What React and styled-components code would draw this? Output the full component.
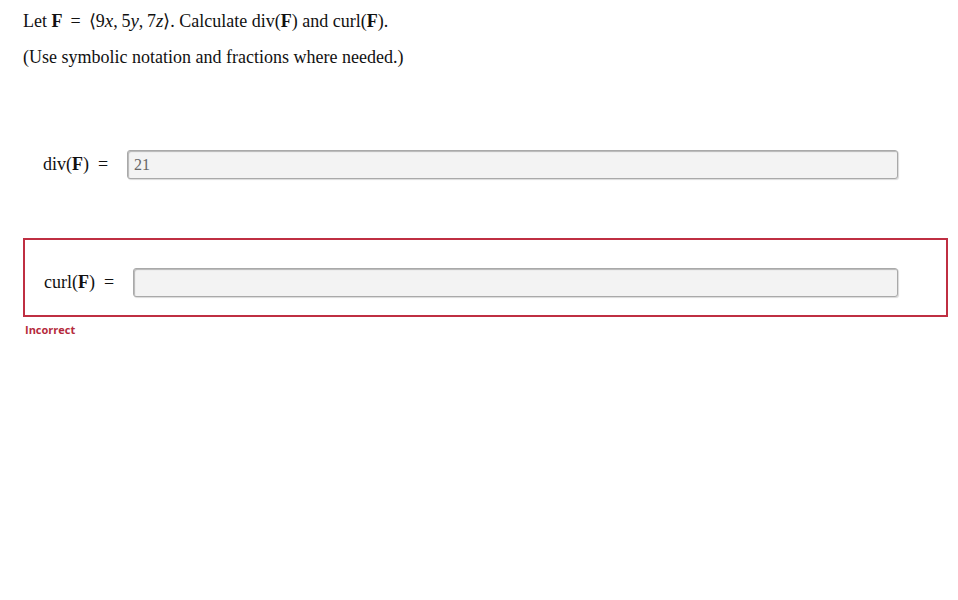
import React from 'react'
import styled, { createGlobalStyle } from 'styled-components'

const Global = createGlobalStyle`
  body {
    margin: 0;
    background: #fff;
    font-family: 'Liberation Serif', 'Times New Roman', serif;
    color: #111;
  }
`

const Page = styled.div`
  padding: 7px 10px 8px 23px;
  width: 958px;
  box-sizing: border-box;
`

const Para = styled.p`
  margin: 0 0 ${props => props.gap || 0}px;
  font-size: 18px;
  line-height: 27px;
`

const Bold = styled.b`
  font-weight: 700;
`

const Var = styled.i`
  font-style: italic;
  font-size: 19px;
`

const Row = styled.div`
  display: flex;
  align-items: center;
  padding-left: ${props => props.indent}px;
  padding-right: ${props => props.right}px;
`

const Label = styled.span`
  font-size: 18px;
  width: ${props => props.w}px;
  flex: none;
  white-space: nowrap;
`

const Field = styled.input`
  flex: 1;
  height: 29px;
  box-sizing: border-box;
  border: 1px solid #a9a9a9;
  border-radius: 3px;
  background: #f3f3f3;
  box-shadow: inset 1px 1px 1px rgba(0, 0, 0, 0.25), 1px 1px 1px rgba(0, 0, 0, 0.15);
  padding: 0 6px;
  font-family: 'Liberation Serif', 'Times New Roman', serif;
  font-size: 16px;
  color: #666;
  outline: none;
`

const DivBlock = styled.div`
  margin-top: 79px;
  margin-right: 50px;
`

const ErrorBox = styled.div`
  margin-top: 59px;
  border: 2px solid #bf2f42;
  padding: 28px 0 18px;
`

const Feedback = styled.div`
  margin: 5px 0 0 2px;
  font-family: 'Open Sans', 'Liberation Sans', sans-serif;
  font-weight: 700;
  font-size: 11px;
  color: #b52a3c;
`

export default function App() {
  return (
    <>
      <Global />
      <Page>
        <Para gap={9}>
          Let <Bold>F</Bold>&thinsp;&nbsp;=&thinsp;&nbsp;⟨9<Var>x</Var>,&thinsp;5<Var>y</Var>,&thinsp;7<Var>z</Var>⟩. Calculate div(<Bold>F</Bold>) and curl(<Bold>F</Bold>).
        </Para>
        <Para>(Use symbolic notation and fractions where needed.)</Para>

        <DivBlock>
          <Row indent={20} right={0}>
            <Label w={84}>div(<Bold>F</Bold>)&nbsp; =</Label>
            <Field defaultValue="21" readOnly />
          </Row>
        </DivBlock>

        <ErrorBox>
          <Row indent={19} right={48}>
            <Label w={89}>curl(<Bold>F</Bold>)&nbsp; =</Label>
            <Field defaultValue="" />
          </Row>
        </ErrorBox>
        <Feedback>Incorrect</Feedback>
      </Page>
    </>
  )
}
